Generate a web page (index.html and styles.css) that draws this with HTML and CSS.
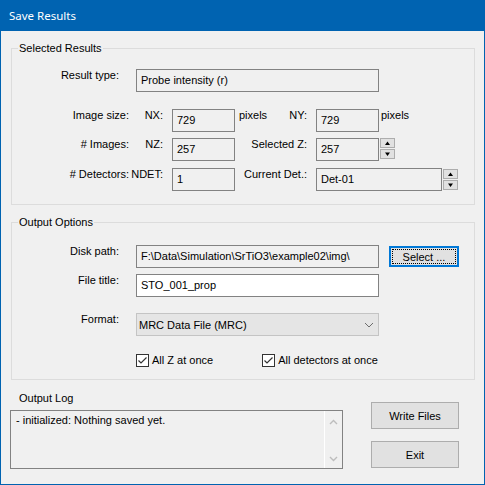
FILE: index.html
```html
<!DOCTYPE html>
<html>
<head>
<meta charset="utf-8">
<link rel="stylesheet" href="styles.css">
</head>
<body>
<div class="window">
  <div class="titlebar">Save Results</div>
  <div class="content">
    <section class="group group-results">
      <div class="group-title">Selected Results</div>
      <div class="row row-first">
        <span class="lbl lbl-short">Result type:</span>
        <span class="field field-wide">Probe intensity (r)</span>
      </div>
      <div class="grid">
        <span class="lbl lbl-long">Image size:</span>
        <span class="lbl lbl-sym">NX:</span>
        <span class="field field-num">729</span>
        <span class="mid"><span class="unit">pixels</span><span class="lbl2">NY:</span></span>
        <span class="tail"><span class="field field-num">729</span><span class="unit">pixels</span></span>

        <span class="lbl lbl-long"># Images:</span>
        <span class="lbl lbl-sym">NZ:</span>
        <span class="field field-num">257</span>
        <span class="mid"><span class="lbl2">Selected Z:</span></span>
        <span class="tail"><span class="field field-num">257</span>
          <span class="spin">
            <span class="spin-btn"><svg width="13" height="8" viewBox="0 0 13 8"><polygon points="4,6 6.5,2.5 9,6" fill="#000"/></svg></span>
            <span class="spin-btn"><svg width="13" height="8" viewBox="0 0 13 8"><polygon points="4,2.5 6.5,6 9,2.5" fill="#000"/></svg></span>
          </span>
        </span>

        <span class="lbl lbl-long"># Detectors:</span>
        <span class="lbl lbl-sym">NDET:</span>
        <span class="field field-num">1</span>
        <span class="mid"><span class="lbl2">Current Det.:</span></span>
        <span class="tail"><span class="field field-det">Det-01</span>
          <span class="spin spin-det">
            <span class="spin-btn"><svg width="13" height="8" viewBox="0 0 13 8"><polygon points="4,6 6.5,2.5 9,6" fill="#000"/></svg></span>
            <span class="spin-btn"><svg width="13" height="8" viewBox="0 0 13 8"><polygon points="4,2.5 6.5,6 9,2.5" fill="#000"/></svg></span>
          </span>
        </span>
      </div>
    </section>

    <section class="group group-output">
      <div class="group-title">Output Options</div>
      <div class="row row-disk">
        <span class="lbl lbl-short">Disk path:</span>
        <span class="field field-wide">F:\Data\Simulation\SrTiO3\example02\img\</span>
        <span class="btn btn-select"><span class="focus">Select ...</span></span>
      </div>
      <div class="row row-file">
        <span class="lbl lbl-short">File title:</span>
        <span class="field field-wide field-edit">STO_001_prop</span>
      </div>
      <div class="row row-format">
        <span class="lbl lbl-short">Format:</span>
        <span class="combo">
          <span>MRC Data File (MRC)</span>
          <svg width="10" height="6" viewBox="0 0 10 6"><polyline points="1,1 5,5 9,1" fill="none" stroke="#6d6d6d" stroke-width="1"/></svg>
        </span>
      </div>
      <div class="row row-checks">
        <label class="check"><span class="box"><svg width="11" height="11" viewBox="0 0 11 11"><polyline points="1.5,5.5 4,8 9.5,2.5" fill="none" stroke="#333" stroke-width="1.2"/></svg></span>All Z at once</label>
        <label class="check check-2"><span class="box"><svg width="11" height="11" viewBox="0 0 11 11"><polyline points="1.5,5.5 4,8 9.5,2.5" fill="none" stroke="#333" stroke-width="1.2"/></svg></span>All detectors at once</label>
      </div>
    </section>

    <div class="bottom">
      <div class="log-col">
        <div class="log-title">Output Log</div>
        <div class="log">
          <div class="log-text">- initialized: Nothing saved yet.</div>
          <div class="scroll">
            <svg width="9" height="6" viewBox="0 0 9 6"><polyline points="1,5 4.5,1.5 8,5" fill="none" stroke="#bdbdbd" stroke-width="1.4"/></svg>
            <svg width="9" height="6" viewBox="0 0 9 6"><polyline points="1,1 4.5,4.5 8,1" fill="none" stroke="#bdbdbd" stroke-width="1.4"/></svg>
          </div>
        </div>
      </div>
      <div class="btn-col">
        <span class="btn btn-big">Write Files</span>
        <span class="btn btn-big btn-exit">Exit</span>
      </div>
    </div>
  </div>
</div>
</body>
</html>
```

FILE: styles.css
```css
html, body {
  margin: 0;
  padding: 0;
  background: #f0f0f0;
}

.window {
  width: 485px;
  height: 485px;
  box-sizing: border-box;
  border: 1px solid #0063b1;
  border-top: none;
  background: #f0f0f0;
  font-family: "Liberation Sans", Arial, sans-serif;
  font-size: 11px;
  color: #000;
  overflow: hidden;
}

.titlebar {
  height: 31px;
  margin: 0 -1px;
  padding-left: 9px;
  background: #0063b1;
  color: #fff;
  font-family: "Noto Sans", "Open Sans", sans-serif;
  font-size: 11.5px;
  line-height: 31px;
}

.content {
  padding: 0 9px 0 10px;
}

.group {
  border: 1px solid #dcdcdc;
}

.group-results {
  margin-top: 17px;
  padding-bottom: 13px;
}

.group-output {
  margin-top: 17px;
  padding-bottom: 12px;
}

.group-title {
  width: max-content;
  height: 14px;
  line-height: 14px;
  margin: -8px 0 0 6px;
  padding: 0 1px;
  background: #f0f0f0;
}

.row {
  display: flex;
  align-items: flex-start;
  height: 23px;
}

.row-first { margin-top: 14px; }
.row-disk { margin-top: 16px; }
.row-file { margin-top: 6px; }
.row-format { margin-top: 16px; }
.row-checks { margin-top: 17px; height: 14px; align-items: center; }

.lbl {
  line-height: 13px;
  text-align: right;
  white-space: nowrap;
}

.lbl-short {
  width: 107px;
  margin-right: 17px;
  flex: none;
}

.field {
  box-sizing: border-box;
  height: 23px;
  border: 1px solid #828282;
  background: #f0f0f0;
  padding: 0 4px;
  line-height: 21px;
  white-space: nowrap;
  overflow: hidden;
  flex: none;
}

.field-wide { width: 243px; }
.field-edit { background: #fff; }
.field-num { width: 63px; }
.field-det { width: 126px; }

.grid {
  margin-top: 17px;
  display: grid;
  grid-template-columns: 117px 43px 63px 81px auto;
  grid-template-rows: 29px 30px 23px;
  align-items: start;
}

.lbl-sym {
  padding-right: 9px;
}

.mid {
  display: flex;
  justify-content: space-between;
  line-height: 13px;
  padding: 0 9px 0 2px;
  white-space: nowrap;
}

.lbl2 { margin-left: auto; }

.tail {
  display: flex;
  align-items: flex-start;
}

.unit {
  line-height: 13px;
  margin-left: 2px;
}

.tail .unit { margin-left: 2px; }

.spin {
  display: flex;
  flex-direction: column;
  gap: 1px;
  margin-left: 1px;
}

.spin-det {
  margin-left: 1px;
  margin-top: 1px;
}

.spin-btn {
  box-sizing: border-box;
  width: 15px;
  height: 10px;
  border: 1px solid #adadad;
  background: #e1e1e1;
  display: flex;
  align-items: center;
  justify-content: center;
}

.btn {
  box-sizing: border-box;
  display: flex;
  align-items: center;
  justify-content: center;
  background: #e1e1e1;
  border: 1px solid #adadad;
  white-space: nowrap;
}

.btn-select {
  width: 70px;
  height: 21px;
  margin: 1px 0 0 10px;
  border: 2px solid #0078d7;
  padding: 1px;
}

.focus {
  flex: 1;
  align-self: stretch;
  display: flex;
  align-items: center;
  justify-content: center;
  border: 1px dotted #000;
}

.combo {
  box-sizing: border-box;
  width: 243px;
  height: 23px;
  border: 1px solid #c4c4c4;
  background: #e5e5e5;
  display: flex;
  align-items: center;
  justify-content: space-between;
  padding: 0 4px 0 2px;
  flex: none;
}

.check {
  display: flex;
  align-items: center;
  white-space: nowrap;
}

.check:first-child {
  margin-left: 124px;
}

.check-2 {
  margin-left: 49px;
}

.box {
  box-sizing: border-box;
  width: 13px;
  height: 13px;
  border: 1px solid #333;
  background: #fff;
  margin-right: 3px;
  display: flex;
}

.bottom {
  display: flex;
  margin-left: -1px;
}

.log-col {
  width: 333px;
}

.log-title {
  margin: 11px 0 0 9px;
  line-height: 14px;
}

.log {
  box-sizing: border-box;
  margin-top: 5px;
  height: 59px;
  border: 1px solid #828282;
  background: #f0f0f0;
  display: flex;
}

.log-text {
  flex: 1;
  padding: 2px 0 0 5px;
  line-height: 14px;
}

.scroll {
  width: 17px;
  border-left: 1px solid #fff;
  display: flex;
  flex-direction: column;
  align-items: center;
  justify-content: space-between;
  padding: 8px 0 6px;
}

.btn-col {
  margin-left: 28px;
  display: flex;
  flex-direction: column;
}

.btn-big {
  width: 88px;
  height: 27px;
  margin-top: 22px;
}

.btn-exit {
  margin-top: 12px;
}
```
